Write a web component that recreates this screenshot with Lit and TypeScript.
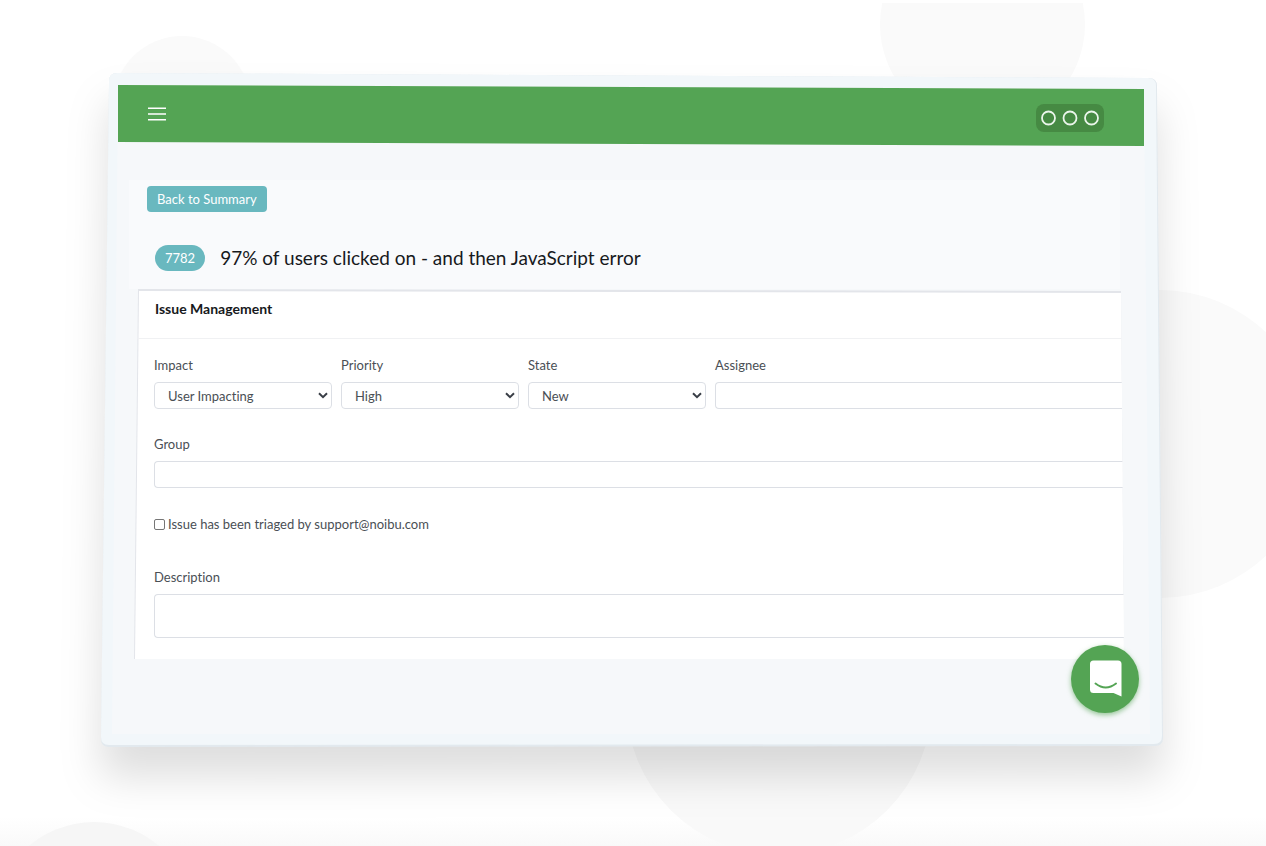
import { LitElement, html, css } from "lit";
import { customElement, property } from "lit/decorators.js";

@customElement("select-field")
class SelectField extends LitElement {
  @property() label = "";
  @property() value = "";

  static styles = css`
    :host {
      display: block;
      min-width: 0;
    }
    .label {
      display: block;
      margin-bottom: 8px;
      line-height: 18px;
    }
    .box {
      position: relative;
    }
    .select {
      display: block;
      box-sizing: border-box;
      width: 100%;
      height: 27px;
      padding: 0 26px 0 13px;
      border: 1px solid #dcdfe5;
      border-radius: 4px;
      background: #fff;
      color: #4a4f55;
      font: inherit;
      appearance: none;
    }
    .chevron {
      position: absolute;
      right: 4px;
      top: 10px;
      width: 10px;
      height: 7px;
      pointer-events: none;
    }
  `;

  render() {
    return html`
      <label class="label" for="control">${this.label}</label>
      <div class="box">
        <select class="select" id="control">
          <option>${this.value}</option>
        </select>
        <svg class="chevron" viewBox="0 0 10 7" fill="none" stroke="#3a3f47" stroke-width="2" aria-hidden="true">
          <path d="M1 1.2 5 5.2 9 1.2" />
        </svg>
      </div>
    `;
  }
}

@customElement("app-root")
class AppRoot extends LitElement {
  static styles = css`
    :host {
      display: block;
      font-family: Lato, "Noto Sans", sans-serif;
      font-size: 13px;
      font-variant-ligatures: none;
      line-height: 18px;
      color: #4a4f55;
    }
    .page {
      position: relative;
      box-sizing: border-box;
      min-height: 100vh;
      padding: 73px 103px 100px 101px;
      overflow: hidden;
      background: linear-gradient(to top, #f9f9f9, rgba(255, 255, 255, 0) 30px) #fff;
    }
    .circle {
      position: absolute;
      border-radius: 50%;
      background: #fafafa;
    }
    .c1 { left: 113px; top: 36px; width: 138px; height: 138px; }
    .c2 { right: 181px; top: -78px; width: 205px; height: 205px; clip-path: inset(81px 0 0 0); }
    .c3 { right: -48px; top: 290px; width: 308px; height: 308px; }
    .c4 { left: 50%; bottom: -8px; width: 306px; height: 306px; margin-left: -7px; background: #f9f9f9; }
    .c5 { left: -6px; top: 822px; width: 200px; height: 200px; background: #f6f6f6; }

    .panel {
      position: relative;
      display: flow-root;
    }
    .frame {
      position: absolute;
      inset: 0;
      width: 100%;
      height: 100%;
      overflow: visible;
      filter: drop-shadow(0 30px 20px rgba(0, 0, 0, 0.13));
    }
    .topbar {
      position: relative;
      display: flex;
      justify-content: space-between;
      height: 61px;
      margin: 12px 19px 0 17px;
      padding: 0 40px 0 30px;
      box-sizing: border-box;
      background: #54a454;
      clip-path: polygon(0 0, 100% 4px, 100% 100%, 0 calc(100% - 4px));
    }
    .menu {
      display: flex;
      align-items: center;
      height: 57px;
      padding: 0;
      border: 0;
      background: none;
    }
    .more {
      display: flex;
      align-items: center;
      justify-content: center;
      align-self: flex-end;
      width: 68px;
      height: 28px;
      margin-bottom: 14px;
      padding: 0;
      border: 0;
      border-radius: 8px;
      background: #468a43;
    }
    .content {
      position: relative;
      margin: 34px 39px 88px 33px;
    }
    .intro {
      margin: 0 4px 0 -5px;
      padding: 6px 0 18px 18px;
      background: #f9fafc;
    }
    .back {
      display: block;
      height: 26px;
      padding: 0 10px;
      border: 0;
      border-radius: 4px;
      background: #69b8bf;
      color: #fff;
      font: inherit;
    }
    .headline {
      display: flex;
      align-items: center;
      gap: 15px;
      margin: 33px 0 0 8px;
    }
    .badge {
      padding: 4px 10px;
      border-radius: 13px;
      background: #69b8bf;
      color: #fff;
    }
    .title {
      margin: 0;
      font-size: 19px;
      font-weight: 400;
      line-height: 24px;
      color: #17191c;
    }
    .card {
      position: relative;
      background: #e3e5ea;
      clip-path: polygon(4px 0, calc(100% - 3px) 2px, 100% 100%, 0 100%);
    }
    .card::before {
      content: "";
      position: absolute;
      inset: 0;
      background: #fff;
      clip-path: polygon(5px 2px, 100% 4px, 100% 100%, 1px 100%);
    }
    .card-title {
      position: relative;
      margin: 0;
      padding: 11px 21px 20px;
      border-bottom: 1px solid #f0f1f3;
      font-size: 14px;
      font-weight: 700;
      line-height: 18px;
      color: #17191c;
    }
    .form {
      position: relative;
      padding: 17px 0 21px 20px;
    }
    .row {
      display: grid;
      grid-template-columns: repeat(3, minmax(0, 178px)) minmax(0, 1fr);
      gap: 9px;
      margin-bottom: 26px;
    }
    .label {
      display: block;
      margin-bottom: 8px;
    }
    .input {
      display: block;
      box-sizing: border-box;
      width: 100%;
      height: 27px;
      padding: 0 13px;
      border: 1px solid #dcdfe5;
      border-right: 0;
      border-radius: 4px 0 0 4px;
      background: #fff;
      font: inherit;
      resize: none;
    }
    .area {
      height: 44px;
    }
    .check {
      display: flex;
      align-items: center;
      gap: 3px;
      margin: 27px 0 35px;
    }
    .tick {
      box-sizing: border-box;
      width: 11px;
      height: 11px;
      margin: 0;
      border: 1px solid #767676;
      border-radius: 2px;
      background: #fff;
      appearance: none;
    }
    .chat {
      position: absolute;
      right: 24px;
      bottom: 34px;
      width: 68px;
      height: 68px;
      padding: 0;
      border: 0;
      border-radius: 50%;
      background: #54a454;
      box-shadow: 0 2px 5px rgba(84, 164, 84, 0.6);
    }
    .chat-icon {
      display: block;
      width: 68px;
      height: 68px;
    }
  `;

  render() {
    return html`
      <main class="page">
        <div class="circle c1"></div>
        <div class="circle c2"></div>
        <div class="circle c3"></div>
        <div class="circle c4"></div>
        <div class="circle c5"></div>

        <div class="panel">
          <svg class="frame" viewBox="0 0 1062 673" preserveAspectRatio="none" aria-hidden="true">
            <path fill="#e2e9ee" d="M16 0 1048 5Q1056 5 1056 13L1062 664Q1062 672 1054 672L8 673Q0 673 0 665L8 8Q8 0 16 0Z" />
            <path fill="#f2f7fa" d="M16 0 1047 5Q1055 5 1055 13L1061 662Q1061 670 1053 670L8 671Q0 671 0 663L8 8Q8 0 16 0Z" />
            <path fill="#f6f8fa" d="M17 12 1043 16 1049 660 11 660Z" />
          </svg>

          <header class="topbar">
            <button class="menu" aria-label="Menu">
              <svg width="18" height="14" viewBox="0 0 18 14" stroke="#fff" stroke-width="1.6">
                <path d="M0 1.2H18M0 7H18M0 12.8H18" />
              </svg>
            </button>
            <button class="more" aria-label="More">
              <svg width="58" height="16" viewBox="0 0 58 16" fill="none" stroke="#eaf5ea" stroke-width="1.8">
                <circle cx="7.5" cy="8" r="6.5" />
                <circle cx="29" cy="8" r="6.5" />
                <circle cx="50.5" cy="8" r="6.5" />
              </svg>
            </button>
          </header>

          <div class="content">
            <div class="intro">
              <button class="back">Back to Summary</button>
              <div class="headline">
                <span class="badge">7782</span>
                <h1 class="title">97% of users clicked on - and then JavaScript error</h1>
              </div>
            </div>

            <section class="card">
              <h2 class="card-title">Issue Management</h2>
              <form class="form">
                <div class="row">
                  <select-field label="Impact" value="User Impacting"></select-field>
                  <select-field label="Priority" value="High"></select-field>
                  <select-field label="State" value="New"></select-field>
                  <div>
                    <label class="label" for="assignee">Assignee</label>
                    <input class="input" id="assignee" type="text" />
                  </div>
                </div>
                <label class="label" for="group">Group</label>
                <input class="input" id="group" type="text" />
                <div class="check">
                  <input class="tick" id="triaged" type="checkbox" />
                  <label for="triaged">Issue has been triaged by support@noibu.com</label>
                </div>
                <label class="label" for="description">Description</label>
                <textarea class="input area" id="description"></textarea>
              </form>
            </section>
          </div>

          <button class="chat" aria-label="Open chat">
            <svg class="chat-icon" viewBox="0 0 68 68" aria-hidden="true">
              <path fill="#fff" d="M22.500 15.500H47Q50.500 15.500 50.500 19V51.500L42.500 48H22.500Q19 48 19 44.500V19Q19 15.500 22.500 15.500Z" />
              <path fill="none" stroke="#54a454" stroke-width="2" stroke-linecap="round" d="M24.500 38.500Q34.700 46.500 45 38.500" />
            </svg>
          </button>
        </div>
      </main>
    `;
  }
}
